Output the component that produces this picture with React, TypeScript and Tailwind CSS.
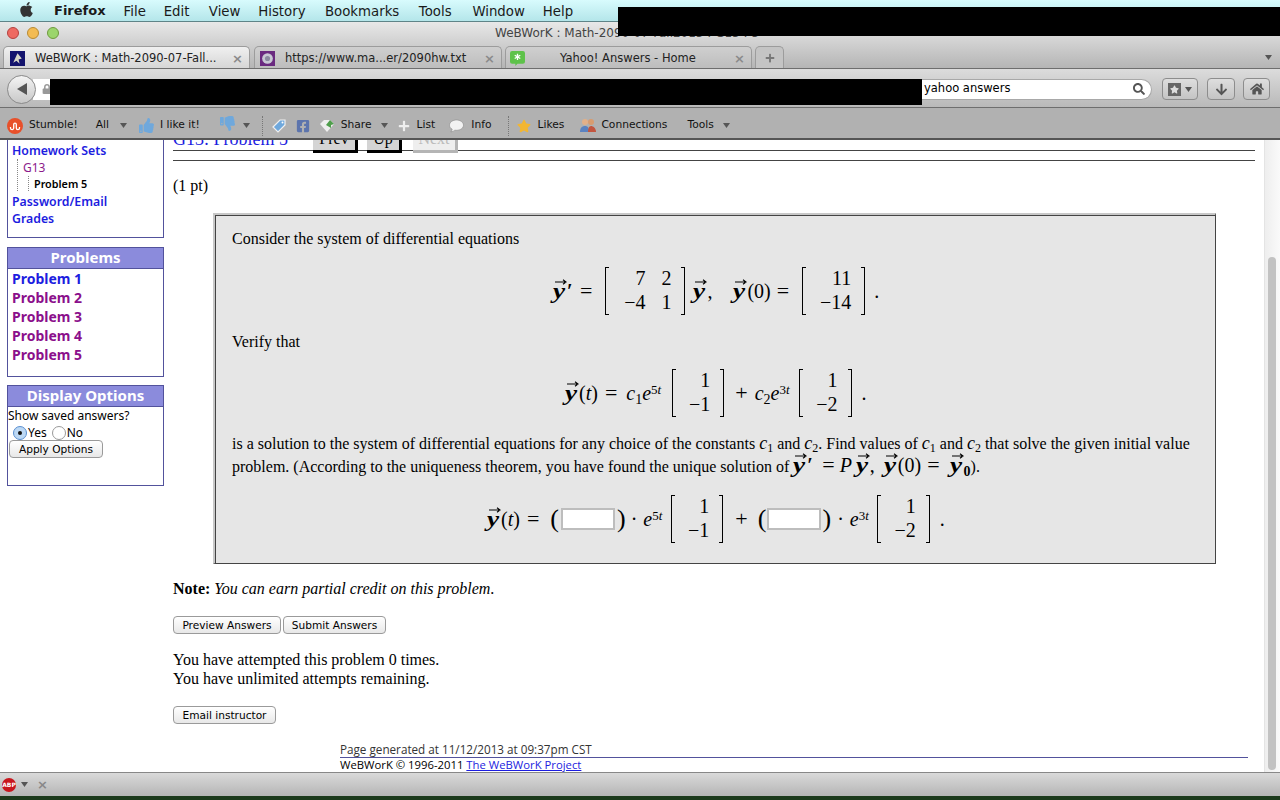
import { ReactNode } from "react";
import { FaApple, FaFacebookSquare, FaThumbsUp, FaThumbsDown, FaStar, FaHome, FaArrowDown, FaSearch, FaPlus, FaLock } from "react-icons/fa";

const chrome = "font-['DejaVu_Sans',sans-serif]";

const Caret = () => (
  <svg width="7" height="5" viewBox="0 0 7 5" className="shrink-0">
    <path d="M0 0h7L3.5 5z" fill="#555" />
  </svg>
);

// bold vector y with the little arrow on top
const Vec = ({ className = "" }: { className?: string }) => (
  <span className={`relative inline-block w-[14px] text-left text-[21px] font-bold italic leading-none ${className}`}>
    <span className="inline-block origin-left scale-x-[1.3]">y</span>
    <svg width="12" height="6" viewBox="0 0 12 6" className="absolute left-[2px] -top-[2px]">
      <path d="M0 3h10M8 .8 11 3 8 5.2" stroke="#000" strokeWidth="1.1" fill="none" />
    </svg>
  </span>
);

const Prime = () => <span className="inline-block w-[5px] font-bold">′</span>;
const Eq = ({ className }: { className: string }) => <span className={`inline-block text-[22px] leading-none ${className}`}>=</span>;
const Plus = ({ className }: { className: string }) => <span className={`text-[22px] leading-none ${className}`}>+</span>;

const Matrix = ({ rows, width, className = "" }: { rows: string[][]; width: string; className?: string }) => (
  <span className={`inline-flex h-[48px] shrink-0 items-stretch ${width} ${className}`}>
    <span className="w-[4px] border-y border-l border-black" />
    <span className="flex flex-1 flex-col justify-center pb-[3px] pr-[10px]">
      {rows.map((r, i) => (
        <span key={i} className="flex h-[24px] items-center justify-end gap-[13px] leading-[24px]">
          {r.map((c, j) => (
            <span key={j} className={r.length > 1 ? (j === 0 ? "w-[27px] text-right" : "w-[13px] text-right") : "text-right"}>
              {c}
            </span>
          ))}
        </span>
      ))}
    </span>
    <span className="w-[4px] border-y border-r border-black" />
  </span>
);

const Exp = ({ c, n, p, className }: { c?: boolean; n?: string; p: string; className: string }) => (
  <span className={`whitespace-nowrap ${className}`}>
    {c && (
      <>
        <i>c</i>
        <sub className="text-[14px] leading-none">{n}</sub>
      </>
    )}
    <i>e</i>
    <sup className="text-[13px] leading-none">
      {p}
      <i>t</i>
    </sup>
  </span>
);

const AnswerBox = ({ className }: { className: string }) => (
  <span className={`inline-block h-[22px] w-[54px] border-2 border-[#bdbdbd] bg-white ${className}`} />
);

const MacButton = ({ children, className = "" }: { children: ReactNode; className?: string }) => (
  <button className={`h-[18px] rounded-[4px] border border-[#9a9a9a] bg-gradient-to-b from-white to-[#e8e8e8] text-[10.6px] leading-none text-black ${chrome} ${className}`}>
    {children}
  </button>
);

const SideBox = ({ title, className, children }: { title?: string; className: string; children: ReactNode }) => (
  <div className={`w-[157px] border border-[#52529c] bg-white ${className}`}>
    {title && (
      <div className="flex h-[21px] items-center justify-center border-b border-[#52529c] bg-[#8b8bdc] pb-[1px] text-[15px] font-bold text-white">
        {title}
      </div>
    )}
    {children}
  </div>
);

const Tab = ({ icon, label, active, className, textClass = "" }: { icon: ReactNode; label: string; active?: boolean; className: string; textClass?: string }) => (
  <div
    className={`flex h-[22px] items-center rounded-t-[5px] border border-b-0 border-[#9c9c9c] pt-[2px] text-[11.5px] ${className} ${
      active ? "bg-gradient-to-b from-[#f0f0f0] to-[#d6d6d6] font-medium" : "bg-gradient-to-b from-[#cfcfcf] to-[#bdbdbd]"
    }`}
  >
    {icon}
    <span className={`flex-1 whitespace-nowrap ${textClass}`}>{label}</span>
    <span className="mr-[6px] text-[13px] font-bold leading-none text-[#8a8a8a]">×</span>
  </div>
);

export default function App() {
  const menus = [
    ["File", "ml-[17px]"],
    ["Edit", "ml-[17px]"],
    ["View", "ml-[18px]"],
    ["History", "ml-[16px]"],
    ["Bookmarks", "ml-[16px]"],
    ["Tools", "ml-[17px]"],
    ["Window", "ml-[18px]"],
    ["Help", "ml-[16px]"],
  ];

  return (
    <div className="relative flex h-[800px] w-[1280px] flex-col overflow-hidden bg-white font-['Liberation_Serif',serif] text-black">
      {/* mac menu bar */}
      <div className={`flex h-[22px] shrink-0 items-center border-b border-[#5f8488] bg-gradient-to-b from-[#d8fbfd] to-[#b4e6ea] pl-[18px] pt-[1px] text-[14px] text-[#1a1a1a] ${chrome}`}>
        <FaApple className="mb-[3px] text-[#333]" size={17} />
        <span className="ml-[19px] text-[13px] font-bold">Firefox</span>
        {menus.map(([m, c]) => (
          <span key={m} className={`${c} scale-x-95`}>
            {m}
          </span>
        ))}
      </div>

      {/* title bar + tabs */}
      <div className={`h-[46px] shrink-0 bg-gradient-to-b from-[#e8e8e8] to-[#b5b5b5] ${chrome}`}>
        <div className="relative flex h-[21px] items-center gap-[8px] pl-[7px]">
          <span className="h-[12px] w-[12px] rounded-full border border-[#b5413f] bg-[#ee6a62]" />
          <span className="h-[12px] w-[12px] rounded-full border border-[#b98a32] bg-[#f3bb52]" />
          <span className="h-[12px] w-[12px] rounded-full border border-[#6f9a3e] bg-[#9bd56c]" />
          <span className="ml-[428px] text-[12px] text-[#444]">WeBWorK : Math-2090-07-Fall2013 : G13 : 5</span>
        </div>
        <div className="flex h-[25px] items-end pl-[3px] text-[#222]">
          <Tab
            active
            className="w-[247px]"
            label="WeBWorK : Math-2090-07-Fall..."
            icon={
              <svg width="15" height="15" viewBox="0 0 14 14" className="ml-[6px] mr-[10px]">
                <rect width="14" height="14" fill="#14146e" />
                <path d="M3 11 7 2l4 5-3 1 1 4-3-3z" fill="#d8d8c8" />
              </svg>
            }
          />
          <Tab
            className="ml-[4px] w-[248px]"
            label="https://www.ma...er/2090hw.txt"
            textClass="font-medium"
            icon={
              <svg width="15" height="15" viewBox="0 0 14 14" className="ml-[5px] mr-[10px]">
                <rect width="14" height="14" fill="#6a2a80" />
                <circle cx="7" cy="7" r="5" fill="#c8c8d4" />
                <circle cx="7" cy="7" r="2.4" fill="#8a8aa0" />
              </svg>
            }
          />
          <Tab
            className="ml-[3px] w-[247px]"
            label="Yahoo! Answers - Home"
            textClass="font-medium"
            icon={
              <svg width="15" height="15" viewBox="0 0 14 14" className="ml-[4px] mr-[35px]">
                <path d="M2 0h10a2 2 0 0 1 2 2v8a2 2 0 0 1-2 2H7l-2 2v-2H2a2 2 0 0 1-2-2V2a2 2 0 0 1 2-2z" fill="#5ec24a" />
                <path d="M7 2.5v6M4.4 4l5.2 3M9.6 4 4.4 7" stroke="#fff" strokeWidth="1.2" />
              </svg>
            }
          />
          <div className="ml-[3px] flex h-[22px] w-[29px] items-center justify-center rounded-t-[5px] border border-b-0 border-[#9c9c9c] bg-[#c4c4c4] text-[#777]">
            <FaPlus size={10} />
          </div>
          <div className="mb-[8px] ml-auto mr-[8px]">
            <Caret />
          </div>
        </div>
      </div>

      {/* nav bar */}
      <div className={`flex h-[40px] shrink-0 items-center border-y border-[#6e6e6e] bg-gradient-to-b from-[#dcdcdc] to-[#b9b9b9] pl-[7px] pt-[2px] ${chrome}`}>
        <div className="z-10 flex h-[29px] w-[29px] items-center justify-center rounded-full border border-[#8a8a8a] bg-gradient-to-b from-[#f4f4f4] to-[#c8c8c8]">
          <svg width="12" height="14" viewBox="0 0 12 14">
            <path d="M11 1v12L1 7z" fill="#555" />
          </svg>
        </div>
        <div className="-ml-[3px] flex h-[21px] w-[889px] items-center bg-white pl-[9px]">
          <FaLock className="text-[#999]" size={10} />
        </div>
        <div className="flex h-[21px] w-[230px] items-center rounded-r-[11px] border-y border-r border-[#a8a8a8] bg-white text-[11.5px] text-black">
          <span className="ml-[2px] flex-1">yahoo answers</span>
          <FaSearch className="mr-[6px] text-[#555]" size={12} />
        </div>
        <div className="ml-[10px] flex h-[22px] w-[36px] items-center justify-center gap-[4px] rounded-[4px] border border-[#8d8d8d] bg-gradient-to-b from-[#dedede] to-[#c4c4c4]">
          <span className="flex h-[13px] w-[13px] items-center justify-center bg-[#666]">
            <FaStar className="text-[#ddd]" size={9} />
          </span>
          <Caret />
        </div>
        <div className="ml-[9px] flex h-[22px] w-[28px] items-center justify-center rounded-[4px] border border-[#8d8d8d] bg-gradient-to-b from-[#dedede] to-[#c4c4c4]">
          <FaArrowDown className="text-[#555]" size={13} />
        </div>
        <div className="ml-[8px] flex h-[22px] w-[27px] items-center justify-center rounded-[4px] border border-[#8d8d8d] bg-gradient-to-b from-[#dedede] to-[#c4c4c4]">
          <FaHome className="text-[#555]" size={14} />
        </div>
      </div>

      {/* stumbleupon toolbar */}
      <div className={`flex h-[32px] shrink-0 items-center border-b-2 border-[#555] bg-[#b1b1b1] pl-[7px] pt-[5px] text-[10.7px] text-[#111] ${chrome}`}>
        <svg width="16" height="16" viewBox="0 0 16 16" className="shrink-0">
          <circle cx="8" cy="8" r="8" fill="#e8502a" />
          <path d="M3.5 9v1a1.6 1.6 0 0 0 3.2 0V6.5a1.3 1.3 0 0 1 2.6 0V10a1.6 1.6 0 0 0 3.2 0V9" stroke="#fff" strokeWidth="1.3" fill="none" />
        </svg>
        <span className="ml-[6px]">Stumble!</span>
        <span className="ml-[18px]">All</span>
        <span className="ml-[11px]"><Caret /></span>
        <FaThumbsUp className="ml-[12px] text-[#6fa8dc]" size={15} />
        <span className="ml-[6px]">I like it!</span>
        <FaThumbsDown className="-mt-[4px] ml-[20px] text-[#6fa8dc]" size={15} />
        <span className="ml-[8px]"><Caret /></span>
        <span className="ml-[12px] h-[20px] border-l border-dotted border-[#777]" />
        <svg width="14" height="14" viewBox="0 0 14 14" className="ml-[9px]">
          <path d="M1 8 8 1h5v5l-7 7z" fill="#6fa8dc" stroke="#f0f0f0" strokeWidth="1.2" />
          <circle cx="10.5" cy="3.5" r="1" fill="#fff" />
        </svg>
        <FaFacebookSquare className="ml-[10px] text-[#5c74ad]" size={14} />
        <svg width="15" height="13" viewBox="0 0 15 13" className="ml-[10px]">
          <path d="M0 5 4 1h6l4 4-7 8z" fill="#eee" />
          <path d="M6 6 10 1l4 4-3 1v3z" fill="#4f9e4c" />
        </svg>
        <span className="ml-[6px]">Share</span>
        <span className="ml-[9px]"><Caret /></span>
        <FaPlus className="ml-[10px] text-[#eee]" size={12} />
        <span className="ml-[7px]">List</span>
        <svg width="15" height="14" viewBox="0 0 15 14" className="ml-[14px]">
          <path d="M7.5 1C3.6 1 .5 3.3.5 6.2c0 1.7 1 3.1 2.7 4 0 1-.7 2-1.4 2.8 1.6-.2 3-.9 4-1.8l1.7.1c3.9 0 7-2.3 7-5.1S11.4 1 7.5 1z" fill="#f2f2f2" stroke="#888" strokeWidth=".6" />
        </svg>
        <span className="ml-[7px]">Info</span>
        <span className="ml-[16px] h-[20px] border-l border-dotted border-[#777]" />
        <FaStar className="ml-[8px] text-[#f2b632]" size={14} />
        <span className="ml-[7px]">Likes</span>
        <svg width="16" height="15" viewBox="0 0 16 15" className="ml-[16px]">
          <circle cx="5" cy="4" r="3" fill="#e3b088" />
          <circle cx="11" cy="4" r="3" fill="#d89c70" />
          <path d="M0 14c0-4 2-6 5-6s4 2 4 6z" fill="#5b82c0" />
          <path d="M8 14c0-4 1-6 3-6s5 2 5 6z" fill="#c2553f" />
        </svg>
        <span className="ml-[5px]">Connections</span>
        <span className="ml-[20px]">Tools</span>
        <span className="ml-[9px]"><Caret /></span>
      </div>

      {/* page */}
      <div className="flex min-h-0 flex-1">
        <div className="flex min-w-0 flex-1 pl-[7px]">
          {/* left column */}
          <aside className="w-[157px] shrink-0 font-['Noto_Sans',sans-serif]">
            <SideBox className="h-[98px] border-t-0 pl-[4px] pt-[2px] text-[12.3px] font-semibold">
              <div className="leading-[17px] text-[#1d1de0]">Homework Sets</div>
              <div className="ml-[5px] border-l border-dotted border-[#888] pl-[5px] text-[12px] font-normal">
                <div className="leading-[17px] text-[#8b1a8b]">G13</div>
                <div className="ml-[5px] border-l border-dotted border-[#888] pl-[5px] text-[10.8px] font-semibold leading-[15px]">Problem 5</div>
              </div>
              <div className="mt-[2px] leading-[17px] text-[#1d1de0]">Password/Email</div>
              <div className="leading-[17px] text-[#1d1de0]">Grades</div>
            </SideBox>
            <SideBox title="Problems" className="mt-[9px] h-[130px]">
              <div className="pl-[4px] text-[14px] font-bold leading-[19px] text-[#8b0f8b]">
                <div className="text-[#1d1de0]">Problem 1</div>
                <div>Problem 2</div>
                <div>Problem 3</div>
                <div>Problem 4</div>
                <div>Problem 5</div>
              </div>
            </SideBox>
            <SideBox title="Display Options" className="mt-[8px] h-[101px]">
              <div className="text-[12px] leading-[17px]">Show saved answers?</div>
              <div className="flex h-[17px] items-center pl-[5px] text-[12px]">
                <span className="flex h-[14px] w-[14px] items-center justify-center rounded-full border border-[#5a8fd0] bg-[#bcd8f4]">
                  <span className="h-[4px] w-[4px] rounded-full bg-[#111]" />
                </span>
                <span className="ml-[1px]">Yes</span>
                <span className="ml-[5px] h-[14px] w-[14px] rounded-full border border-[#999] bg-white" />
                <span className="ml-[1px]">No</span>
              </div>
              <MacButton className="-mt-[1px] ml-[1px] block w-[94px]">Apply Options</MacButton>
            </SideBox>
          </aside>

          {/* main column */}
          <main className="ml-[9px] w-[1082px] shrink-0 text-[16px]">
            <div className="flex h-[11px] items-start border-b border-[#444]">
              <div className="relative flex h-[13px] w-full overflow-hidden">
                <span className="-mt-[12px] w-[114px] whitespace-nowrap text-[18px] leading-[23px] text-[#1d1de0]">G13: Problem 5</span>
                <span className="ml-[26px] h-[13px] w-[45px] overflow-hidden border-b-[3px] border-r-[3px] border-black bg-[#d4d4d4] text-center text-[16px] leading-[12px]">
                  <span className="relative -top-[7px]">Prev</span>
                </span>
                <span className="ml-[9px] h-[13px] w-[35px] overflow-hidden border-b-[3px] border-r-[3px] border-black bg-[#d4d4d4] text-center text-[16px] leading-[12px]">
                  <span className="relative -top-[7px]">Up</span>
                </span>
                <span className="ml-[11px] h-[13px] w-[45px] overflow-hidden border-b-[3px] border-r-[3px] border-[#b5b5b5] bg-[#eeeeee] text-center text-[16px] leading-[12px] text-[#bbb]">
                  <span className="relative -top-[7px]">Next</span>
                </span>
              </div>
            </div>
            <div className="mt-[9px] border-b border-[#444]" />

            <p className="mt-[16px] leading-[18px]">(1 pt)</p>

            {/* problem box */}
            <div className="ml-[40px] mt-[18px] h-[351px] w-[1003px] border-b border-l-2 border-r border-t-2 border-b-[#444] border-l-[#c8c8c8] border-r-[#444] border-t-[#c8c8c8] bg-[#e6e6e6] pl-[17px] pr-[20px] pt-[12px] shadow-[inset_1px_1px_0_#444]">
              <p className="leading-[24px]">Consider the system of differential equations</p>

              <div className="mt-[16px] flex h-[48px] items-center text-[20px] leading-none">
                <Vec className="ml-[321px]" />
                <Prime />
                <Eq className="ml-[8px]" />
                <Matrix className="ml-[13px]" width="w-[80px]" rows={[["7", "2"], ["−4", "1"]]} />
                <Vec className="ml-[8px]" />
                <span>,</span>
                <Vec className="ml-[21px]" />
                <span>(0)</span>
                <Eq className="ml-[6px]" />
                <Matrix className="ml-[13px]" width="w-[63px]" rows={[["11"], ["−14"]]} />
                <span className="ml-[9px]">.</span>
              </div>

              <p className="mt-[15px] leading-[24px]">Verify that</p>

              <div className="mt-[15px] flex h-[48px] items-center text-[20px] leading-none">
                <Vec className="ml-[333px]" />
                <span>(<i>t</i>)</span>
                <Eq className="ml-[7px]" />
                <Exp className="ml-[9px]" c n="1" p="5" />
                <Matrix className="ml-[11px]" width="w-[52px]" rows={[["1"], ["−1"]]} />
                <Plus className="ml-[11px]" />
                <Exp className="ml-[7px]" c n="2" p="3" />
                <Matrix className="ml-[9px]" width="w-[53px]" rows={[["1"], ["−2"]]} />
                <span className="ml-[10px]">.</span>
              </div>

              <p className="mt-[16px] whitespace-nowrap leading-[21px]">
                is a solution to the system of differential equations for any choice of the constants <i className="text-[18px]">c</i><sub className="text-[12px] leading-none">1</sub> and <i className="text-[18px]">c</i><sub className="text-[12px] leading-none">2</sub>. Find values of <i className="text-[18px]">c</i><sub className="text-[12px] leading-none">1</sub> and <i className="text-[18px]">c</i><sub className="text-[12px] leading-none">2</sub> that solve the given initial value
                <br />
                problem. (According to the uniqueness theorem, you have found the unique solution of{" "}
                <span className="text-[20px] leading-none">
                  <Vec />
                  <Prime />
                  <Eq className="ml-[10px]" />
                  <i className="ml-[5px] inline-block">P</i>
                  <Vec className="ml-[4px]" />,
                  <Vec className="ml-[9px]" />
                  (0)
                  <Eq className="ml-[6px]" />
                  <Vec className="ml-[10px]" />
                  <sub className="text-[14px] font-bold leading-none">0</sub>
                </span>
                ).
              </p>

              <div className="mt-[18px] flex h-[48px] items-center text-[20px] leading-none">
                <Vec className="ml-[255px]" />
                <span>(<i>t</i>)</span>
                <Eq className="ml-[7px]" />
                <span className="ml-[11px] text-[26px] font-light">(</span>
                <AnswerBox className="ml-[2px]" />
                <span className="ml-[2px] text-[26px] font-light">)</span>
                <span className="ml-[5px]">·</span>
                <Exp className="ml-[6px]" p="5" />
                <Matrix className="ml-[9px]" width="w-[52px]" rows={[["1"], ["−1"]]} />
                <Plus className="ml-[12px]" />
                <span className="ml-[10px] text-[26px] font-light">(</span>
                <AnswerBox className="ml-[1px]" />
                <span className="ml-[1px] text-[26px] font-light">)</span>
                <span className="ml-[6px]">·</span>
                <Exp className="ml-[6px]" p="3" />
                <Matrix className="ml-[8px]" width="w-[53px]" rows={[["1"], ["−2"]]} />
                <span className="ml-[10px]">.</span>
              </div>
            </div>

            <p className="mt-[16px] leading-[18px]">
              <b>Note:</b> <i>You can earn partial credit on this problem</i>.
            </p>

            <div className="mt-[18px] flex gap-[2px]">
              <MacButton className="w-[108px]">Preview Answers</MacButton>
              <MacButton className="w-[103px]">Submit Answers</MacButton>
            </div>

            <div className="mt-[16px] leading-[19px]">
              <p>You have attempted this problem 0 times.</p>
              <p>You have unlimited attempts remaining.</p>
            </div>

            <MacButton className="mt-[18px] block w-[103px]">Email instructor</MacButton>

            <footer className="ml-[167px] mr-[7px] mt-[17px] font-['Open_Sans',sans-serif] text-[11.7px] leading-[16px] text-[#333]">
              <div className="border-b border-[#52529c]">Page generated at 11/12/2013 at 09:37pm CST</div>
              <div className="text-[11.3px] leading-[14px] text-black">
                WeBWorK © 1996-2011 <span className="text-[#1d1de0] underline">The WeBWorK Project</span>
              </div>
            </footer>
          </main>
        </div>

        {/* scrollbar */}
        <div className="flex w-[16px] shrink-0 border-l border-[#e4e4e4] bg-gradient-to-r from-[#eeeeee] to-[#fafafa] pb-[2px] pl-[3px] pr-[4px] pt-[117px]">
          <div className="h-full w-full rounded-full bg-[#c2c2c2]" />
        </div>
      </div>

      {/* addon bar */}
      <div className={`flex h-[24px] shrink-0 items-center border-t border-[#888] bg-gradient-to-b from-[#dadada] to-[#b5b5b5] pl-[2px] ${chrome}`}>
        <span className="flex h-[14px] w-[14px] items-center justify-center rounded-full bg-[#c8161d] text-[6px] font-bold text-white">ABP</span>
        <span className="ml-[5px]"><Caret /></span>
        <span className="ml-[9px] text-[13px] font-bold leading-none text-[#888]">×</span>
      </div>
      <div className="h-[4px] shrink-0 bg-[#1c3a1c]" />

      {/* redacted areas in the screenshot */}
      <div className="absolute left-[618px] top-[7px] h-[29px] w-[662px] bg-black" />
      <div className="absolute left-[50px] top-[79px] h-[26px] w-[872px] bg-black" />
    </div>
  );
}
